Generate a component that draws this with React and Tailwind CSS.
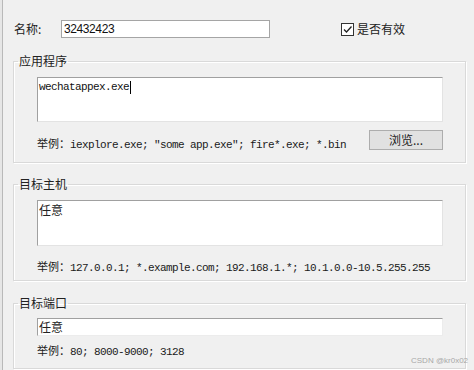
import React from "react";

function Example({ text }) {
  return (
    <div className="text-[11px] leading-[16px] text-[#1a1a1a] whitespace-pre">
      <span className="font-['Noto_Sans_CJK_SC',sans-serif]">举例：</span>
      <span className="font-['Liberation_Mono','Noto_Sans_CJK_SC',monospace] tracking-[-0.6px]">{text}</span>
    </div>
  );
}

function Group({ title, className, children }) {
  return (
    <fieldset
      className={`ml-[14px] w-[453px] border border-[#d9d9d9] shadow-[inset_1px_1px_0_#ffffff,1px_1px_0_#ffffff] pl-[23px] pr-[22px] ${className}`}
    >
      <legend className="-ml-[19px] px-[1px] text-[12px] leading-[16px] text-[#222] font-['Noto_Sans_CJK_SC',sans-serif]">
        {title}
      </legend>
      {children}
    </fieldset>
  );
}

export default function App() {
  return (
    <div className="w-[474px] h-[370px] bg-[#f0f0f0] relative overflow-hidden flex">
      <div className="w-[3px] h-full bg-[#e6e6e6] border-r border-[#b9b9b9] shrink-0" />
      <div className="flex-1 flex flex-col -ml-[4px]">
        {/* name row */}
        <div className="flex items-center h-[18px] mt-[20px]">
          <span className="ml-[15px] w-[47px] text-[12px] leading-[16px] text-[#222] font-['Noto_Sans_CJK_SC',sans-serif]">
            名称:
          </span>
          <div className="w-[209px] h-[18px] bg-white border border-[#a5a5a5] flex items-center pl-[2px] text-[12px] tracking-[-0.4px] text-[#111] font-['Liberation_Sans',sans-serif]">
            32432423
          </div>
          <div className="ml-[71px] flex items-center">
            <div className="w-[13px] h-[13px] border border-[#333] bg-white flex items-center justify-center">
              <svg width="11" height="11" viewBox="0 0 11 11">
                <path d="M2 5.5 L4.5 8 L9.5 2.5" fill="none" stroke="#222" strokeWidth="1.3" />
              </svg>
            </div>
            <span className="ml-[3px] text-[12px] leading-[16px] text-[#222] font-['Noto_Sans_CJK_SC',sans-serif]">
              是否有效
            </span>
          </div>
        </div>

        <Group title="应用程序" className="mt-[15px] pb-[9px]">
          <div className="mt-[8px] w-[406px] h-[45px] bg-white border-t border-l border-[#a0a0a0] border-r border-b border-r-[#e3e3e3] border-b-[#e3e3e3] pl-[1px] pt-[1px]">
            <div className="flex items-center text-[11px] leading-[16px] text-[#111] font-['Liberation_Mono',monospace] tracking-[-0.6px]">
              wechatappex.exe
              <span className="inline-block w-[1px] h-[13px] bg-black ml-[1px]" />
            </div>
          </div>
          <div className="mt-[8px] flex justify-between w-[406px]">
            <div className="pt-[5px]">
              <Example text={'iexplore.exe; "some app.exe"; fire*.exe; *.bin'} />
            </div>
            <button className="w-[74px] h-[20px] bg-[#e1e1e1] border border-[#adadad] text-[12px] leading-[16px] text-[#222] font-['Noto_Sans_CJK_SC',sans-serif]">
              浏览...
            </button>
          </div>
        </Group>

        <Group title="目标主机" className="mt-[13px] pb-[4px]">
          <div className="mt-[8px] w-[406px] h-[46px] bg-white border-t border-l border-[#a0a0a0] border-r border-b border-r-[#e3e3e3] border-b-[#e3e3e3] pl-[1px] pt-[1px]">
            <div className="text-[12px] leading-[16px] text-[#222] font-['Noto_Sans_CJK_SC',sans-serif]">
              任意
            </div>
          </div>
          <div className="mt-[12px]">
            <Example text={"127.0.0.1; *.example.com; 192.168.1.*; 10.1.0.0-10.5.255.255"} />
          </div>
        </Group>

        <Group title="目标端口" className="mt-[14px] pb-[8px]">
          <div className="mt-[7px] w-[406px] h-[18px] bg-white border-t border-l border-[#a0a0a0] border-r border-b border-r-[#ececec] border-b-[#ececec] pl-[1px] flex items-center">
            <div className="text-[12px] leading-[16px] text-[#222] font-['Noto_Sans_CJK_SC',sans-serif]">
              任意
            </div>
          </div>
          <div className="mt-[6px]">
            <Example text={"80; 8000-9000; 3128"} />
          </div>
        </Group>
      </div>
      <div className="absolute left-[411px] top-[356px] whitespace-nowrap text-[8px] leading-[10px] text-[#a8a8a8] font-['Liberation_Sans',sans-serif]">
        CSDN @kr0x02
      </div>
    </div>
  );
}
